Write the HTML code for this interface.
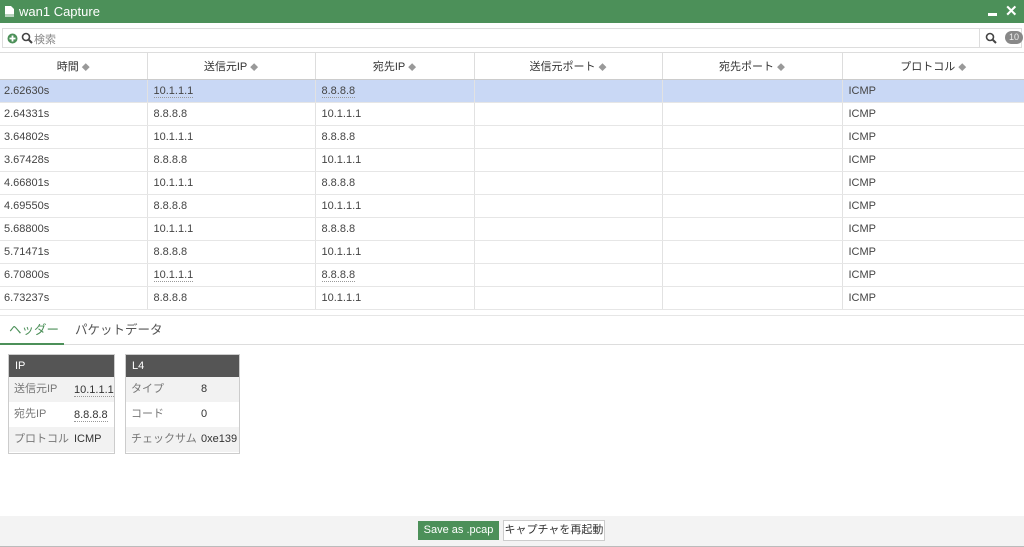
<!DOCTYPE html>
<html><head><meta charset="utf-8"><style>
*{box-sizing:border-box;margin:0;padding:0}
body{width:1024px;height:547px;overflow:hidden;background:#fff;font-family:"Liberation Sans","Noto Sans CJK JP",sans-serif;font-size:11px;color:#333;position:relative}
.title{position:absolute;left:0;top:0;width:1024px;height:23px;background:#4c9059;color:#fff;font-size:13px;line-height:23px;padding-left:19px}
.search{position:absolute;left:2px;top:28px;width:1020px;height:20px;border:1px solid #ddd;background:#fff}
table{position:absolute;left:0;top:52px;border-collapse:collapse;width:1024px;table-layout:fixed}
th{height:27px;font-weight:normal;border-right:1px solid #ddd;border-top:1px solid #ddd;border-bottom:1px solid #ccc;text-align:center;font-size:11px;color:#333}
td{height:23px;padding-left:4px;border-right:1px solid #e2e2e2;border-bottom:1px solid #e6e6e6;font-size:11px;color:#444}
td:nth-child(2),td:nth-child(3),td:nth-child(6){padding-left:6px}
tr.sel td{background:#c9d8f5}
th:last-child,td:last-child{border-right:none}
.arr{color:#999;font-size:8px}
.u{border-bottom:1px dotted #999}
.tabs{position:absolute;left:0;top:315px;width:1024px;height:30px;border-top:1px solid #e6e6e6;border-bottom:1px solid #ddd;font-size:12.5px;color:#555}
.box{position:absolute;top:354px;border:1px solid #ccc;background:#fff}
.box .h{background:#555;color:#fff;height:22px;line-height:22px;padding-left:6px;font-size:11px}
.box .r{height:25px;line-height:25px;font-size:11px;display:flex}
.box .r:nth-child(even){background:#f2f2f2}
.foot{position:absolute;left:0;top:516px;width:1024px;height:31px;background:#f3f3f3;border-bottom:1px solid #bbb}
</style></head><body>
<div class="title"><svg style="position:absolute;left:4px;top:5px" width="11" height="13"><path d="M1 1h6l3 3v8H1z" fill="#fff"/><rect x="1" y="9" width="9" height="3" fill="#4c9059" opacity=".4"/></svg>wan1 Capture
<div style="position:absolute;left:988px;top:13px;width:9px;height:3px;background:#fff"></div>
<div style="position:absolute;left:1005px;top:0;font-size:15px;font-weight:bold">✕</div></div>
<div class="search">
<svg style="position:absolute;left:4px;top:4px" width="11" height="11"><circle cx="5.5" cy="5.5" r="5" fill="#4c9059"/><path d="M5.5 2.5v6M2.5 5.5h6" stroke="#fff" stroke-width="1.8"/></svg>
<svg style="position:absolute;left:18px;top:3px" width="12" height="12"><circle cx="5" cy="5" r="3.5" fill="none" stroke="#444" stroke-width="1.6"/><path d="M7.5 7.5l3.5 3.5" stroke="#444" stroke-width="2"/></svg>
<span style="position:absolute;left:31px;top:2px;color:#888;font-size:11px">検索</span>
<div style="position:absolute;left:976px;top:-1px;width:1px;height:20px;background:#ddd"></div>
<svg style="position:absolute;left:982px;top:3px" width="12" height="12"><circle cx="5" cy="5" r="3.5" fill="none" stroke="#444" stroke-width="1.6"/><path d="M7.5 7.5l3.5 3.5" stroke="#444" stroke-width="2"/></svg>
<div style="position:absolute;left:1002px;top:2px;width:18px;height:13px;border-radius:7px;background:#888;color:#eee;font-size:9px;text-align:center;line-height:13px">10</div>
</div>
<table>
<colgroup><col style="width:147px"><col style="width:168px"><col style="width:159px"><col style="width:188px"><col style="width:180px"><col style="width:182px"></colgroup>
<tr><th>時間 <span class="arr">◆</span></th><th>送信元IP <span class="arr">◆</span></th><th>宛先IP <span class="arr">◆</span></th><th>送信元ポート <span class="arr">◆</span></th><th>宛先ポート <span class="arr">◆</span></th><th>プロトコル <span class="arr">◆</span></th></tr>
<tr class="sel"><td>2.62630s</td><td><span class="u">10.1.1.1</span></td><td><span class="u">8.8.8.8</span></td><td></td><td></td><td>ICMP</td></tr>
<tr><td>2.64331s</td><td>8.8.8.8</td><td>10.1.1.1</td><td></td><td></td><td>ICMP</td></tr>
<tr><td>3.64802s</td><td>10.1.1.1</td><td>8.8.8.8</td><td></td><td></td><td>ICMP</td></tr>
<tr><td>3.67428s</td><td>8.8.8.8</td><td>10.1.1.1</td><td></td><td></td><td>ICMP</td></tr>
<tr><td>4.66801s</td><td>10.1.1.1</td><td>8.8.8.8</td><td></td><td></td><td>ICMP</td></tr>
<tr><td>4.69550s</td><td>8.8.8.8</td><td>10.1.1.1</td><td></td><td></td><td>ICMP</td></tr>
<tr><td>5.68800s</td><td>10.1.1.1</td><td>8.8.8.8</td><td></td><td></td><td>ICMP</td></tr>
<tr><td>5.71471s</td><td>8.8.8.8</td><td>10.1.1.1</td><td></td><td></td><td>ICMP</td></tr>
<tr style="border-top:1px solid #bbb"><td>6.70800s</td><td><span class="u">10.1.1.1</span></td><td><span class="u">8.8.8.8</span></td><td></td><td></td><td>ICMP</td></tr>
<tr style="border-top:1px solid #bbb"><td>6.73237s</td><td>8.8.8.8</td><td>10.1.1.1</td><td></td><td></td><td>ICMP</td></tr>
</table>
<div class="tabs">
<span style="position:absolute;left:9px;top:3px;color:#4c9059">ヘッダー</span>
<div style="position:absolute;left:0;top:27px;width:64px;height:2px;background:#4c9059"></div>
<span style="position:absolute;left:75px;top:3px">パケットデータ</span>
</div>
<div class="box" style="left:8px;width:107px;height:100px">
<div class="h">IP</div>
<div class="r"><span style="width:65px;padding-left:5px;color:#777">送信元IP</span><span class="u" style="height:15px;line-height:17px;margin-top:5px">10.1.1.1</span></div>
<div class="r"><span style="width:65px;padding-left:5px;color:#777">宛先IP</span><span class="u" style="height:15px;line-height:17px;margin-top:5px">8.8.8.8</span></div>
<div class="r"><span style="width:65px;padding-left:5px;color:#777">プロトコル</span><span>ICMP</span></div>
</div>
<div class="box" style="left:125px;width:115px;height:100px">
<div class="h">L4</div>
<div class="r"><span style="width:75px;padding-left:5px;color:#777">タイプ</span><span>8</span></div>
<div class="r"><span style="width:75px;padding-left:5px;color:#777">コード</span><span>0</span></div>
<div class="r"><span style="width:75px;padding-left:5px;color:#777">チェックサム</span><span>0xe139</span></div>
</div>
<div class="foot">
<div style="position:absolute;left:418px;top:5px;width:81px;height:19px;background:#4c9059;color:#fff;font-size:11px;text-align:center;line-height:19px">Save as .pcap</div>
<div style="position:absolute;left:503px;top:4px;width:102px;height:21px;background:#fff;border:1px solid #ccc;color:#333;font-size:11px;text-align:center;line-height:19px">キャプチャを再起動</div>
</div>
</body></html>
